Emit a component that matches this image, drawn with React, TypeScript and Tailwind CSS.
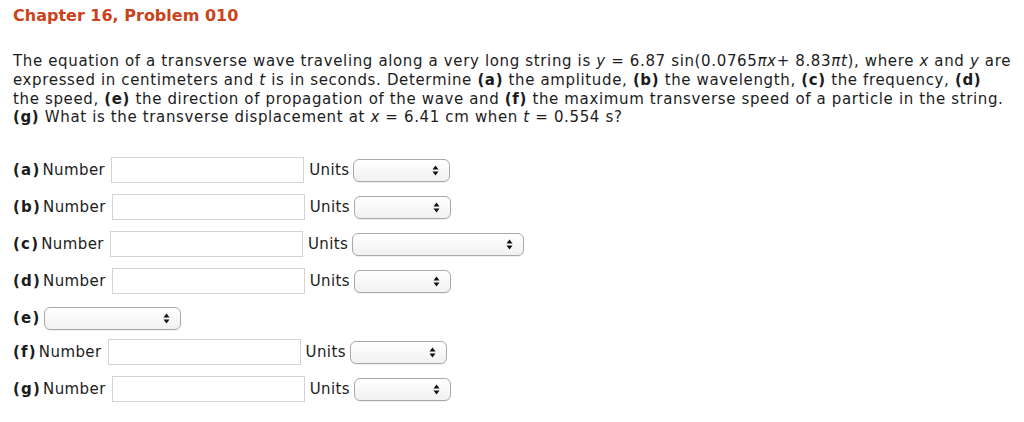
const font = { fontFamily: '"DejaVu Sans", Verdana, sans-serif' };

function Arrows() {
  return (
    <svg width="7" height="11" viewBox="0 0 7 11" className="shrink-0">
      <path d="M3.5 0.5 L6.5 4.5 L0.5 4.5 Z" fill="#111" />
      <path d="M3.5 10.5 L6.5 6.5 L0.5 6.5 Z" fill="#111" />
    </svg>
  );
}

function Select({ w }: { w: string }) {
  return (
    <div
      className={`${w} h-[23px] rounded-[6px] border border-[#a9a9a9] bg-gradient-to-b from-white to-[#f1f1f1] flex items-center justify-end pr-[10px] shadow-[0_1px_0_rgba(0,0,0,0.06)]`}
    >
      <Arrows />
    </div>
  );
}

function Row({
  tag,
  sel = "w-[97px]",
  className = "",
}: {
  tag: string;
  sel?: string;
  className?: string;
}) {
  return (
    <div className={`flex items-center h-[26px] ${className}`}>
      <span className="font-bold tracking-[1.2px]">({tag})</span>
      <span className="ml-[2px]">Number</span>
      <div className="ml-[6px] w-[193px] h-[26px] border border-[#d3d3d3] bg-white" />
      <span className="ml-[5px]">Units</span>
      <div className="ml-[4px]">
        <Select w={sel} />
      </div>
    </div>
  );
}

export default function App() {
  return (
    <div className="w-[1024px] h-[422px] bg-white text-[#1c1c1c] pl-[13px] pt-[5px]" style={font}>
      <h1 className="text-[16px] leading-[22px] font-bold text-[#c9431b]">Chapter 16, Problem 010</h1>

      <p className="mt-[25px] text-[15px] leading-[18.8px] whitespace-nowrap tracking-[0.64px]">
        The equation of a transverse wave traveling along a very long string is <i>y</i> = 6.87 sin(0.0765<i>π</i>
        <i>x</i>+ 8.83<i>πt</i>), where <i>x</i> and <i>y</i> are
        <br />
        expressed in centimeters and <i>t</i> is in seconds. Determine <b>(a)</b> the amplitude, <b>(b)</b> the
        wavelength, <b>(c)</b> the frequency, <b>(d)</b>
        <br />
        the speed, <b>(e)</b> the direction of propagation of the wave and <b>(f)</b> the maximum transverse speed of a
        particle in the string.
        <br />
        <b>(g)</b> What is the transverse displacement at <i>x</i> = 6.41 cm when <i>t</i> = 0.554 s?
      </p>

      <div className="text-[15px] mt-[30px] tracking-[0.4px]">
        <Row tag="a" />
        <Row tag="b" className="mt-[11px]" />
        <Row tag="c" sel="w-[172px]" className="mt-[11px]" />
        <Row tag="d" className="mt-[11px]" />
        <div className="flex items-center h-[26px] mt-[11px]">
          <span className="font-bold tracking-[1.2px]">(e)</span>
          <div className="ml-[4px]">
            <Select w="w-[137px]" />
          </div>
        </div>
        <Row tag="f" className="mt-[8px]" />
        <Row tag="g" className="mt-[11px]" />
      </div>
    </div>
  );
}
